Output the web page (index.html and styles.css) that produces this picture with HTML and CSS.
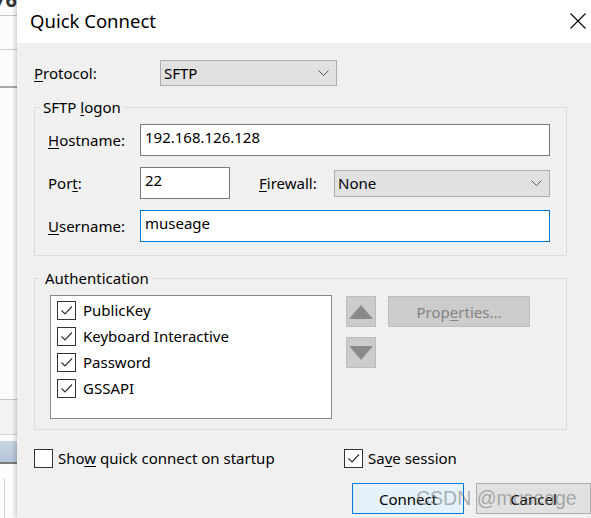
FILE: index.html
```html
<!DOCTYPE html>
<html>
<head>
<meta charset="utf-8">
<title>Quick Connect</title>
<link rel="stylesheet" href="styles.css">
</head>
<body>
<div class="screen">
  <div class="app">
    <div class="app-top"><span class="app-num">76</span></div>
    <div class="app-row r1"></div>
    <div class="app-row r2"></div>
    <div class="app-list"></div>
    <div class="app-row r3"></div>
    <div class="app-sel"></div>
    <div class="app-foot"><div class="app-vline"></div></div>
  </div>
  <div class="dialog">
    <div class="titlebar">
      <span class="title">Quick Connect</span>
      <svg class="close" width="16" height="16" viewBox="0 0 16 16"><path d="M0.5 0.5 L15.5 15.5 M15.5 0.5 L0.5 15.5" stroke="#000" stroke-width="1.1" fill="none"/></svg>
    </div>
    <div class="content">
      <div class="protocol-row">
        <span class="proto-lbl"><u>P</u>rotocol:</span>
        <div class="select proto-select"><span>SFTP</span><svg class="chev" width="11" height="6" viewBox="0 0 11 6"><path d="M0.5 0.5 L5.5 5.5 L10.5 0.5" stroke="#555" stroke-width="1" fill="none"/></svg></div>
      </div>
      <fieldset class="group logon">
        <legend>SFTP <u>l</u>ogon</legend>
        <div class="frow">
          <span class="flbl"><u>H</u>ostname:</span>
          <div class="input wide">192.168.126.128</div>
        </div>
        <div class="frow">
          <span class="flbl">Por<u>t</u>:</span>
          <div class="input port">22</div>
          <span class="fw-lbl"><u>F</u>irewall:</span>
          <div class="select fw-select"><span>None</span><svg class="chev" width="11" height="6" viewBox="0 0 11 6"><path d="M0.5 0.5 L5.5 5.5 L10.5 0.5" stroke="#555" stroke-width="1" fill="none"/></svg></div>
        </div>
        <div class="frow">
          <span class="flbl"><u>U</u>sername:</span>
          <div class="input wide focused">museage</div>
        </div>
      </fieldset>
      <fieldset class="group auth">
        <legend>Authentication</legend>
        <div class="auth-body">
          <div class="listbox">
            <div class="item"><span class="cb"><svg width="17" height="17" viewBox="0 0 17 17"><path d="M3.5 8.5 L7 12 L14 4.5" stroke="#333" stroke-width="1.2" fill="none"/></svg></span><span>PublicKey</span></div>
            <div class="item"><span class="cb"><svg width="17" height="17" viewBox="0 0 17 17"><path d="M3.5 8.5 L7 12 L14 4.5" stroke="#333" stroke-width="1.2" fill="none"/></svg></span><span>Keyboard Interactive</span></div>
            <div class="item"><span class="cb"><svg width="17" height="17" viewBox="0 0 17 17"><path d="M3.5 8.5 L7 12 L14 4.5" stroke="#333" stroke-width="1.2" fill="none"/></svg></span><span>Password</span></div>
            <div class="item"><span class="cb"><svg width="17" height="17" viewBox="0 0 17 17"><path d="M3.5 8.5 L7 12 L14 4.5" stroke="#333" stroke-width="1.2" fill="none"/></svg></span><span>GSSAPI</span></div>
          </div>
          <div class="arrows">
            <div class="arrow-btn"><svg width="24" height="14" viewBox="0 0 24 14"><polygon points="12,0 24,14 0,14" fill="#8a8a8a"/></svg></div>
            <div class="arrow-btn"><svg width="24" height="14" viewBox="0 0 24 14"><polygon points="0,0 24,0 12,14" fill="#8a8a8a"/></svg></div>
          </div>
          <div class="props">Prop<u>e</u>rties...</div>
        </div>
      </fieldset>
      <div class="opts">
        <div class="opt show-opt"><span class="cb"></span><span class="opt-lbl">Sho<u>w</u> quick connect on startup</span></div>
        <div class="opt"><span class="cb"><svg width="17" height="17" viewBox="0 0 17 17"><path d="M3.5 8.5 L7 12 L14 4.5" stroke="#333" stroke-width="1.2" fill="none"/></svg></span><span class="opt-lbl">Sa<u>v</u>e session</span></div>
      </div>
      <div class="buttons">
        <div class="btn default">Connect</div>
        <div class="btn cancel">Cancel</div>
      </div>
    </div>
    <div class="watermark">CSDN @museage</div>
  </div>
</div>
</body>
</html>
```
FILE: styles.css
```css
html, body {
  margin: 0;
  padding: 0;
}
body {
  width: 591px;
  height: 518px;
  overflow: hidden;
  font-family: "Noto Sans", "Open Sans", sans-serif;
  font-size: 15px;
  color: #000;
}
u { text-decoration-thickness: 1px; text-underline-offset: 2px; }

.screen {
  display: flex;
  width: 591px;
  height: 518px;
  overflow: hidden;
}

/* background application strip */
.app {
  width: 17px;
  flex: none;
  background: #fcfcfc;
  display: flex;
  flex-direction: column;
  overflow: hidden;
}
.app-top {
  height: 15px;
  border-bottom: 1px solid #c9c9c9;
  overflow: hidden;
}
.app-num {
  display: block;
  margin-top: -10px;
  margin-left: -6px;
  font-size: 20px;
  font-weight: bold;
  color: #333;
  line-height: 20px;
  white-space: nowrap;
}
.r1 { height: 34px; border-bottom: 1px solid #cfcfcf; }
.r2 { height: 37px; border-bottom: 2px solid #a9a9a9; }
.app-list { height: 320px; border-bottom: 1px solid #c4c4c4; }
.r3 { height: 34px; background: #f3f3f3; border-bottom: 1px solid #d6d6d6; }
.app-sel {
  margin-top: 6px;
  height: 22px;
  background: linear-gradient(#c9d6e3, #b3c4d6);
  border-bottom: 2px solid #7c7c7c;
}
.app-foot { flex: 1; }
.app-vline {
  margin-top: 14px;
  margin-left: 4px;
  width: 1px;
  height: 40px;
  background: #d3d3d3;
}

/* dialog */
.dialog {
  flex: 1;
  position: relative;
  background: #f0f0f0;
  box-shadow: -2px 0 4px rgba(0, 0, 0, 0.18);
}
.titlebar {
  height: 43px;
  background: #fff;
  display: flex;
  align-items: center;
  justify-content: space-between;
  padding: 0 5px 2px 13px;
  box-sizing: border-box;
}
.title {
  font-size: 18.5px;
  line-height: 24px;
}
.close { display: block; margin-top: 1px; }

.content {
  padding-left: 17px;
}

.protocol-row {
  margin-top: 17px;
  height: 26px;
  display: flex;
  align-items: center;
}
.proto-lbl { width: 126px; }

.select {
  box-sizing: border-box;
  border: 1px solid #adadad;
  background: #e1e1e1;
  display: flex;
  align-items: center;
  justify-content: space-between;
  padding: 0 7px 0 3px;
}
.proto-select { width: 177px; height: 26px; }
.chev { display: block; }

.group {
  margin: 0;
  box-sizing: border-box;
  width: 533px;
  border: 1px solid #dcdcdc;
  min-inline-size: 0;
}
.group legend {
  padding: 0 3px;
  line-height: 20px;
  margin-left: -8px;
}
.logon {
  margin-top: 11px;
  padding: 7px 16px 13px 13px;
}
.frow {
  display: flex;
  align-items: center;
  height: 32px;
}
.frow + .frow { margin-top: 11px; }
.flbl { width: 92px; }
.input {
  box-sizing: border-box;
  height: 32px;
  border: 1px solid #7a7a7a;
  background: #fff;
  padding: 2px 4px 0;
  line-height: 20px;
  align-self: center;
}
.wide { width: 410px; }
.port { width: 90px; }
.focused { border-color: #0078d7; }
.fw-lbl { margin-left: 29px; width: 75px; }
.fw-select { width: 216px; height: 27px; }

.auth {
  margin-top: 12px;
  padding: 7px 16px 10px 15px;
}
.auth-body {
  display: flex;
  align-items: flex-start;
}
.listbox {
  box-sizing: border-box;
  width: 282px;
  height: 124px;
  border: 1px solid #828790;
  background: #fff;
  padding: 1px 0 0 6px;
}
.item {
  height: 26px;
  display: flex;
  align-items: center;
}
.cb {
  box-sizing: border-box;
  width: 19px;
  height: 19px;
  border: 1px solid #333;
  background: #fff;
  flex: none;
  display: flex;
  align-items: center;
  justify-content: center;
  margin-right: 7px;
}
.cb svg { display: block; }

.arrows {
  margin-left: 14px;
  margin-top: 1px;
  display: flex;
  flex-direction: column;
  gap: 10px;
}
.arrow-btn {
  box-sizing: border-box;
  width: 30px;
  height: 31px;
  background: #cccccc;
  border: 1px solid #bdbdbd;
  display: flex;
  align-items: center;
  justify-content: center;
}
.arrow-btn svg { display: block; }
.props {
  box-sizing: border-box;
  margin-left: 12px;
  margin-top: 1px;
  width: 142px;
  height: 31px;
  background: #cccccc;
  border: 1px solid #bdbdbd;
  color: #838383;
  display: flex;
  align-items: center;
  justify-content: center;
}

.opts {
  margin-top: 19px;
  display: flex;
  height: 19px;
  align-items: center;
}
.opt { display: flex; align-items: center; }
.opt .cb { margin-right: 5px; }
.show-opt { width: 310px; }
.opt-lbl { line-height: 19px; }

.buttons {
  margin-top: 15px;
  padding-left: 318px;
  display: flex;
  gap: 12px;
}
.btn {
  box-sizing: border-box;
  height: 31px;
  display: flex;
  align-items: center;
  justify-content: center;
}
.default {
  width: 112px;
  background: #e5f1fb;
  border: 1px solid #0078d7;
}
.cancel {
  width: 115px;
  background: #e1e1e1;
  border: 1px solid #adadad;
}

.watermark {
  position: absolute;
  left: 399px;
  top: 486px;
  font-family: "Liberation Sans", Arial, sans-serif;
  font-size: 19.5px;
  line-height: 24px;
  color: rgba(115, 115, 115, 0.55);
  white-space: nowrap;
  pointer-events: none;
}
```
